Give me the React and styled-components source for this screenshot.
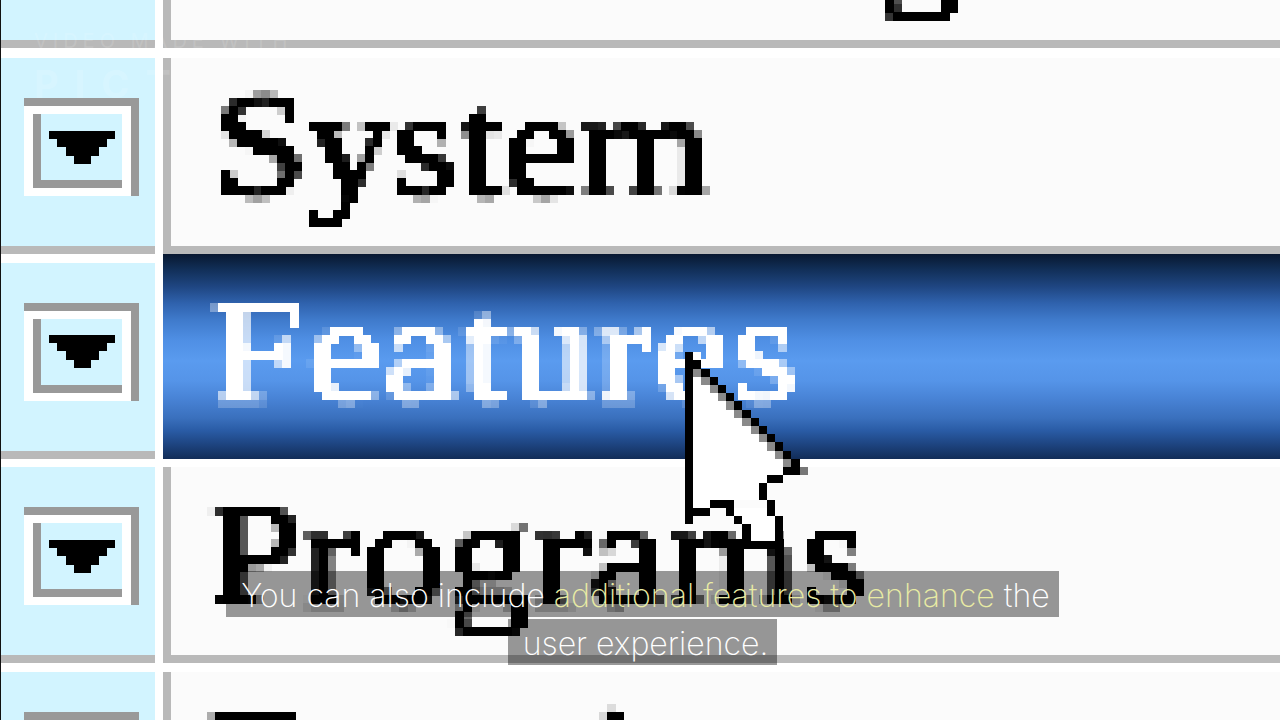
import React from "react";
import styled, { createGlobalStyle } from "styled-components";

const GlobalStyle = createGlobalStyle`
  html, body {
    margin: 0;
    padding: 0;
    background: #fff;
  }
`;

const Stage = styled.div`
  position: relative;
  width: 1280px;
  height: 720px;
  overflow: hidden;
  background: #fff;
`;

const List = styled.div`
  display: flex;
  flex-direction: column;
  gap: 8.5px;
  margin-top: -148px;
  border-left: 1px solid #111;
`;

const Row = styled.div`
  display: grid;
  grid-template-columns: 154px 1fr;
  column-gap: 8px;
  height: 196px;
  flex-shrink: 0;
  margin-bottom: ${(p) => (p.$first ? "1.5px" : "0")};
`;

const Side = styled.div`
  box-sizing: border-box;
  background: #d2f4ff;
  border-bottom: 8px solid #b9b9b9;
  padding: 40px 0 0 23px;
`;

const Cell = styled.div`
  box-sizing: border-box;
  background: #fbfbfb;
  border-left: 8px solid #b9b9b9;
  border-bottom: 8px solid #b9b9b9;
  padding-left: ${(p) => p.$inset}px;
`;

const ActiveCell = styled.div`
  box-sizing: border-box;
  height: 204.5px;
  margin-top: -8.5px;
  padding: 8.5px 0 0 47px;
  background: linear-gradient(
    180deg,
    #081830 0%,
    #12305a 8%,
    #1f4682 16%,
    #2f62ad 24%,
    #3f7acb 32%,
    #4f8fe4 42%,
    #5a9bef 52%,
    #5594e8 62%,
    #4680d2 72%,
    #3a70bd 80%,
    #2a5ca6 86%,
    #1f4785 92%,
    #122d58 100%
  );
`;

const Word = styled.div`
  height: 188px;
  line-height: 175px;
  font-family: "Liberation Serif", "Times New Roman", serif;
  font-size: 150px;
  letter-spacing: ${(p) => p.$spacing}px;
  white-space: nowrap;
  color: ${(p) => (p.$light ? "#fff" : "#000")};
  -webkit-text-stroke: 2.2px currentColor;
  filter: url(#pixelate);
`;

const WordInner = styled.span`
  display: inline-block;
  transform: scaleX(1.14);
  transform-origin: left center;
`;

const DropButton = styled.div`
  box-sizing: border-box;
  width: 115px;
  height: 98px;
  background: #fff;
  border-top: 8px solid #999;
  border-right: 8px solid #999;
  padding: 8px 9px 8px 9px;
`;

const DropWell = styled.div`
  box-sizing: border-box;
  height: 100%;
  display: flex;
  align-items: center;
  justify-content: center;
  background: #d2f4ff;
  border-left: 8px solid #999;
  border-bottom: 8px solid #999;
`;

const Watermark = styled.div`
  position: absolute;
  left: 34px;
  top: 31px;
  font-family: "Inter", sans-serif;
  color: rgba(255, 255, 255, 0.14);
  line-height: 1;
`;

const MarkSmall = styled.div`
  font-size: 20px;
  letter-spacing: 5px;
  white-space: nowrap;
`;

const MarkBig = styled.div`
  margin-top: 14px;
  font-size: 38px;
  font-weight: 700;
  letter-spacing: 16px;
`;

const PointerSvg = styled.svg`
  position: absolute;
  left: 685px;
  top: 352px;
`;

const Captions = styled.div`
  position: absolute;
  left: 5px;
  right: 0;
  top: 571px;
  display: flex;
  flex-direction: column;
  align-items: center;
  gap: 2px;
  font-family: "Inter", "Open Sans", sans-serif;
  font-weight: 200;
  font-size: 32.1px;
  color: #fff;
`;

const CaptionLine = styled.div`
  height: 46px;
  line-height: 50px;
  padding: 0 9px 0 15px;
  background: rgba(0, 0, 0, 0.4);
  white-space: nowrap;
`;

const Mark = styled.span`
  color: #e8eba4;
`;

const PixelFilter = () => (
  <svg width="0" height="0" style={{ position: "absolute" }}>
    <filter id="pixelate" x="0" y="0" width="1" height="1" colorInterpolationFilters="sRGB">
      <feGaussianBlur in="SourceGraphic" stdDeviation="2.2" result="soft" />
      <feFlood x="4" y="4" width="1" height="1" floodColor="#000" />
      <feComposite width="8" height="8" />
      <feTile result="grid" />
      <feComposite in="soft" in2="grid" operator="in" />
      <feMorphology operator="dilate" radius="4" result="blocks" />
      <feComponentTransfer in="blocks">
        <feFuncA type="linear" slope="2.4" intercept="-0.6" />
      </feComponentTransfer>
    </filter>
  </svg>
);

const DownArrow = () => (
  <svg width="66" height="33" viewBox="0 0 66 33" shapeRendering="crispEdges">
    <path d="M0 0H66V8H58V16H50V25H42V33H25V25H17V16H8V8H0Z" fill="#000" />
  </svg>
);

// [first, last] columns per row of the arrow, in cursor pixels
const pointerFill = [
  [1, 1], [1, 1], [1, 1], [1, 2], [1, 3], [1, 4], [1, 5], [1, 6], [1, 7], [1, 8],
  [1, 9], [1, 10], [1, 11], [1, 12], [1, 11], [1, 9], [1, 8], [1, 8], [1, 2], [6, 9],
  [7, 10], [8, 10], [8, 10],
];

// [row, first, last] of the black outline
const pointerInk = [
  [0, 0, 0], [1, 1, 1], [2, 2, 2], [3, 3, 3], [4, 4, 4], [5, 5, 5], [6, 6, 6], [7, 7, 7],
  [8, 8, 8], [9, 9, 9], [10, 10, 10], [11, 11, 11], [12, 12, 12], [13, 13, 13], [14, 12, 13],
  [15, 10, 11], [16, 9, 9], [17, 9, 9], [18, 3, 5], [18, 10, 10], [19, 0, 2], [19, 5, 5],
  [19, 10, 10], [20, 6, 6], [20, 11, 11], [21, 7, 7], [21, 11, 11], [22, 7, 7], [22, 11, 11],
  [23, 7, 11],
];

const pointerShade = [2, 3, 4, 5, 6, 7, 8, 9, 10, 11, 12, 13];

const Pointer = () => (
  <PointerSvg width="131" height="197" viewBox="0 0 16 24" shapeRendering="crispEdges">
    {pointerFill.map(([a, b], y) => (
      <rect key={y} x={a} y={y} width={b - a + 1} height="1" fill="#fff" />
    ))}
    {pointerShade.map((r) => (
      <rect key={r} x={r - 1} y={r} width="1" height="1" fill="#8a8a8a" />
    ))}
    <rect x="0" y="0" width="1" height="21" fill="#000" />
    {pointerInk.map(([y, a, b], i) => (
      <rect key={i} x={a} y={y} width={b - a + 1} height="1" fill="#000" />
    ))}
    <rect x="14" y="14" width="1" height="1" fill="#777" />
  </PointerSvg>
);

const DropDown = () => (
  <DropButton>
    <DropWell>
      <DownArrow />
    </DropWell>
  </DropButton>
);

const PixelWord = ({ children, light, spacing = 1 }) => (
  <Word $light={light} $spacing={spacing}>
    <WordInner>{children}</WordInner>
  </Word>
);

export default function App() {
  return (
    <>
      <GlobalStyle />
      <PixelFilter />
      <Stage>
        <List>
          <Row $first>
            <Side />
            <Cell $inset={42}>
              <PixelWord spacing={-2}>Scheduling</PixelWord>
            </Cell>
          </Row>
          <Row>
            <Side>
              <DropDown />
            </Side>
            <Cell $inset={42}>
              <PixelWord spacing={-1}>System</PixelWord>
            </Cell>
          </Row>
          <Row>
            <Side>
              <DropDown />
            </Side>
            <ActiveCell>
              <PixelWord light spacing={1}>
                Features
              </PixelWord>
            </ActiveCell>
          </Row>
          <Row>
            <Side>
              <DropDown />
            </Side>
            <Cell $inset={36}>
              <PixelWord spacing={0.5}>Programs</PixelWord>
            </Cell>
          </Row>
          <Row>
            <Side>
              <DropDown />
            </Side>
            <Cell $inset={36}>
              <PixelWord spacing={-2.5}>Favorites</PixelWord>
            </Cell>
          </Row>
        </List>
        <Watermark>
          <MarkSmall>VIDEO MADE WITH</MarkSmall>
          <MarkBig>PICTORY</MarkBig>
        </Watermark>
        <Pointer />
        <Captions>
          <CaptionLine>
            You can also include <Mark>additional features to enhance</Mark> the
          </CaptionLine>
          <CaptionLine>user experience.</CaptionLine>
        </Captions>
      </Stage>
    </>
  );
}
